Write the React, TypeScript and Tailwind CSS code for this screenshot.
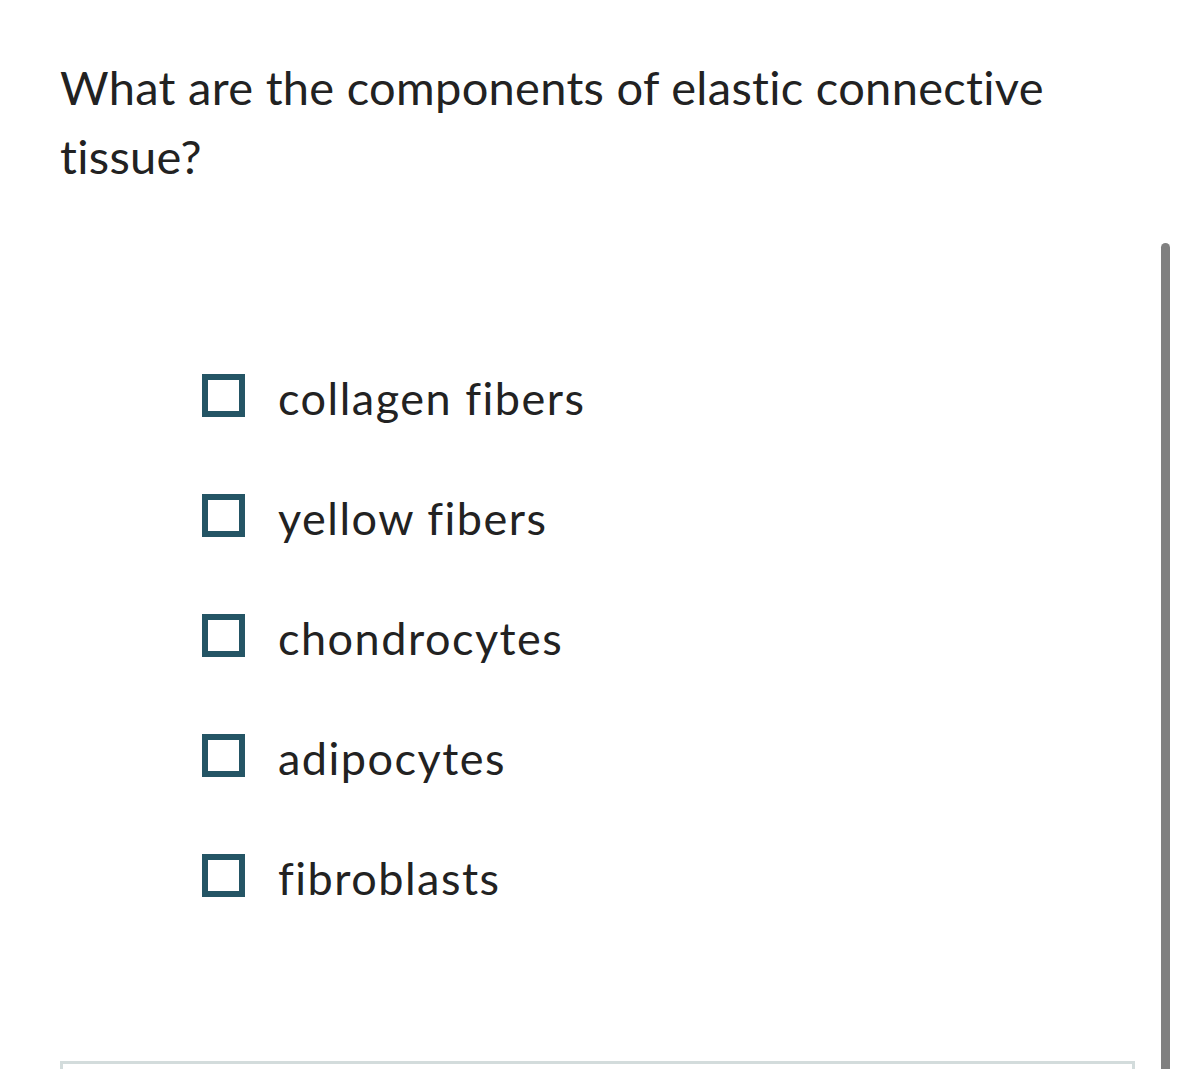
import React from 'react';

const options = ['collagen fibers', 'yellow fibers', 'chondrocytes', 'adipocytes', 'fibroblasts'];

function OptionRow({ label }: { label: string }) {
  return (
    <div className="flex h-[120px] items-center">
      <div className="h-[43px] w-[43px] shrink-0 border-[6px] border-[#245565] bg-white" />
      <span className="ml-[33px] mt-[6px] text-[45px] leading-none tracking-[1.5px] text-[#222222]">{label}</span>
    </div>
  );
}

export default function App() {
  return (
    <div
      className="relative h-[1069px] w-[1179px] overflow-hidden bg-white [font-variant-ligatures:none]"
      style={{ fontFamily: 'Lato, "Open Sans", sans-serif' }}
    >
      <div className="px-[60px] pt-[53px]">
        <h1 className="max-w-[1010px] text-[47px] font-normal leading-[69px] tracking-[0.3px] text-[#222222]">
          What are the components of elastic connective tissue?
        </h1>
      </div>

      <div className="mt-[52px] flex">
        <div className="flex-1">
          <div className="pl-[202px] pt-[92px]">
            {options.map((o) => (
              <OptionRow key={o} label={o} />
            ))}
          </div>
          <div className="ml-[60px] mr-[26px] mt-[126px] h-[20px] border-x-[3px] border-t-[3px] border-[#d3dcdc]" />
        </div>
        <div className="mr-[9px] h-[900px] w-[9px] rounded-t-full bg-[#808080]" />
      </div>
    </div>
  );
}
